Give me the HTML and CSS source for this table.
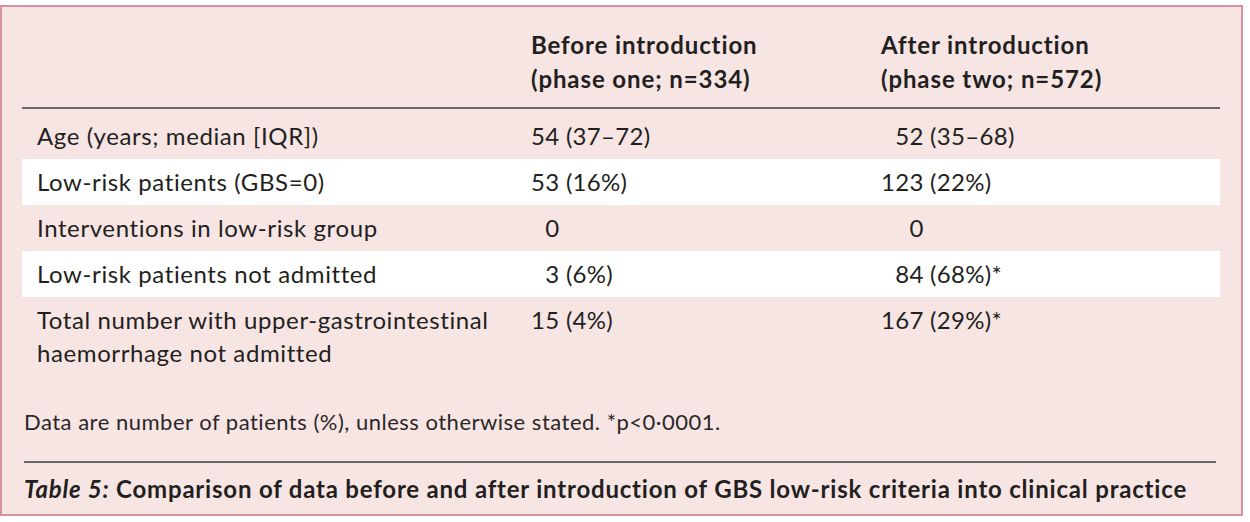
FILE: index.html
```html
<!DOCTYPE html>
<html lang="en">
<head>
<meta charset="utf-8">
<title>Table 5</title>
<link rel="stylesheet" href="styles.css">
</head>
<body>
<div class="panel">
  <table class="data">
    <thead>
      <tr>
        <th class="label"></th>
        <th class="col">Before introduction<br>(phase one; n=334)</th>
        <th class="col">After introduction<br>(phase two; n=572)</th>
      </tr>
    </thead>
    <tbody>
      <tr class="first">
        <td class="label">Age (years; median [IQR])</td>
        <td>54 (37–72)</td>
        <td>&#8199;52 (35–68)</td>
      </tr>
      <tr class="shade">
        <td class="label">Low-risk patients (GBS=0)</td>
        <td>53 (16%)</td>
        <td>123 (22%)</td>
      </tr>
      <tr>
        <td class="label">Interventions in low-risk group</td>
        <td>&#8199;0</td>
        <td>&#8199;&#8199;0</td>
      </tr>
      <tr class="shade">
        <td class="label">Low-risk patients not admitted</td>
        <td>&#8199;3 (6%)</td>
        <td>&#8199;84 (68%)*</td>
      </tr>
      <tr>
        <td class="label">Total number with upper-gastrointestinal<br>haemorrhage not admitted</td>
        <td>15 (4%)</td>
        <td>167 (29%)*</td>
      </tr>
    </tbody>
  </table>
  <p class="note">Data are number of patients (%), unless otherwise stated. *p&lt;0·0001.</p>
  <p class="caption"><em>Table 5:</em> Comparison of data before and after introduction of GBS low-risk criteria into clinical practice</p>
</div>
</body>
</html>
```

FILE: styles.css
```css
html, body {
  margin: 0;
  padding: 0;
  background: #ffffff;
}

body {
  padding-top: 5px;
  font-family: Lato, "Open Sans", "Liberation Sans", sans-serif;
  color: #231f20;
}

.panel {
  box-sizing: border-box;
  width: 1243px;
  height: 511px;
  border: 2px solid #d8919f;
  background: #f7e5e4;
  padding: 21px 25px 0 20px;
}

.data {
  width: 1198px;
  border-collapse: collapse;
  font-size: 24px;
  line-height: 33px;
}

.data th {
  font-weight: 700;
  text-align: left;
  line-height: 34px;
  letter-spacing: 0.9px;
  padding: 0 0 11px 0;
  border-bottom: 2px solid #6a6666;
  vertical-align: bottom;
}

.data th.label {
  width: 509px;
}

.data th.col:nth-child(2) {
  width: 350px;
}

.data td {
  padding: 6px 0 7px 0;
  vertical-align: top;
  white-space: nowrap;
  letter-spacing: 0.3px;
}

.data td.label {
  padding-left: 15px;
  letter-spacing: 0.6px;
}

.data tr.first td {
  padding-top: 10px;
}

.data tr.shade td {
  background: #ffffff;
}

.note {
  margin: 31px 0 0 2px;
  font-size: 22px;
  line-height: 30px;
  letter-spacing: 0.5px;
  color: #2b2728;
  padding-bottom: 24px;
  border-bottom: 2px solid #6a6666;
}

.caption {
  margin: 0 0 0 2px;
  padding-top: 11px;
  font-size: 24px;
  line-height: 30px;
  font-weight: 700;
  letter-spacing: 0.8px;
}

.caption em {
  font-style: italic;
}
```
